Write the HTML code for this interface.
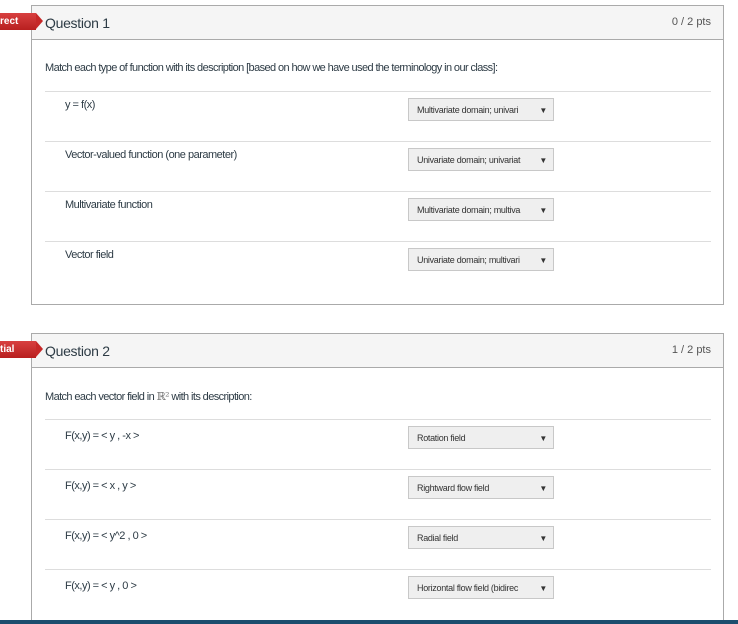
<!DOCTYPE html>
<html><head><style>
html,body{margin:0;width:738px;height:624px;overflow:hidden}
body{background:#fff;position:relative;font-family:"Liberation Sans",sans-serif;color:#2d3b45}
.box{position:absolute;left:31px;width:691px;border:1px solid #aaa;background:#fff}
.hd{height:33px;background:#f5f5f5;border-bottom:1px solid #aaa;position:relative}
.hd .t{position:absolute;left:13px;top:9px;font-size:14px;color:#2d3b45;letter-spacing:-0.3px}
.hd .p{position:absolute;right:12px;top:10px;font-size:11px;color:#555}
.badge{position:absolute;z-index:5;left:0;height:17px;background:linear-gradient(#d84040,#b81f1f);color:#fff;font-size:10px;font-weight:bold;line-height:17px;width:36px}
.badge:after{content:"";position:absolute;right:-7px;top:0;border-left:7px solid #c62828;border-top:8.5px solid transparent;border-bottom:8.5px solid transparent}
.intro{position:absolute;left:13px;font-size:11px;color:#2d3b45;letter-spacing:-0.6px}
.sep{position:absolute;left:13px;width:666px;border-top:1px solid #ddd}
.lbl{position:absolute;left:33px;font-size:11px;letter-spacing:-0.5px}
.sel{position:absolute;left:376px;height:23px;border:1px solid #c8c8c8;background:#efefef;font-size:9px;line-height:23px;padding-left:8px;box-sizing:border-box;width:146px;color:#333;white-space:nowrap;overflow:hidden;letter-spacing:-0.3px}
.sel:after{content:"▼";position:absolute;right:6px;top:0;font-size:8px;background:#efefef;padding-left:3px}
.blue{position:absolute;z-index:6;left:0;top:620px;width:738px;height:4px;background:#1c4e6e}
</style></head><body>
<div class="badge" style="top:13px">rect</div>
<div class="box" style="top:5px;height:298px">
<div class="hd"><span class="t">Question 1</span><span class="p">0 / 2 pts</span></div>
<div class="intro" style="top:56px">Match each type of function with its description [based on how we have used the terminology in our class]:</div>
<div class="sep" style="top:85px"></div>
<div class="lbl" style="top:93px">y = f(x)</div>
<div class="sel" style="top:92px">Multivariate domain; univari</div>
<div class="sep" style="top:135px"></div>
<div class="lbl" style="top:143px">Vector-valued function (one parameter)</div>
<div class="sel" style="top:142px">Univariate domain; univariat</div>
<div class="sep" style="top:185px"></div>
<div class="lbl" style="top:193px">Multivariate function</div>
<div class="sel" style="top:192px">Multivariate domain; multiva</div>
<div class="sep" style="top:235px"></div>
<div class="lbl" style="top:243px">Vector field</div>
<div class="sel" style="top:242px">Univariate domain; multivari</div>
</div>
<div class="badge" style="top:341px">tial</div>
<div class="box" style="top:333px;height:300px">
<div class="hd"><span class="t">Question 2</span><span class="p">1 / 2 pts</span></div>
<div class="intro" style="top:56px">Match each vector field in <span style="font-family:'DejaVu Serif',serif;color:#777">ℝ²</span> with its description:</div>
<div class="sep" style="top:85px"></div>
<div class="lbl" style="top:96px">F(x,y) = &lt; y , -x &gt;</div>
<div class="sel" style="top:92px">Rotation field</div>
<div class="sep" style="top:135px"></div>
<div class="lbl" style="top:146px">F(x,y) = &lt; x , y &gt;</div>
<div class="sel" style="top:142px">Rightward flow field</div>
<div class="sep" style="top:185px"></div>
<div class="lbl" style="top:196px">F(x,y) = &lt; y^2 , 0 &gt;</div>
<div class="sel" style="top:192px">Radial field</div>
<div class="sep" style="top:235px"></div>
<div class="lbl" style="top:246px">F(x,y) = &lt; y , 0 &gt;</div>
<div class="sel" style="top:242px">Horizontal flow field (bidirec</div>
</div>
<div class="blue"></div>
</body></html>
